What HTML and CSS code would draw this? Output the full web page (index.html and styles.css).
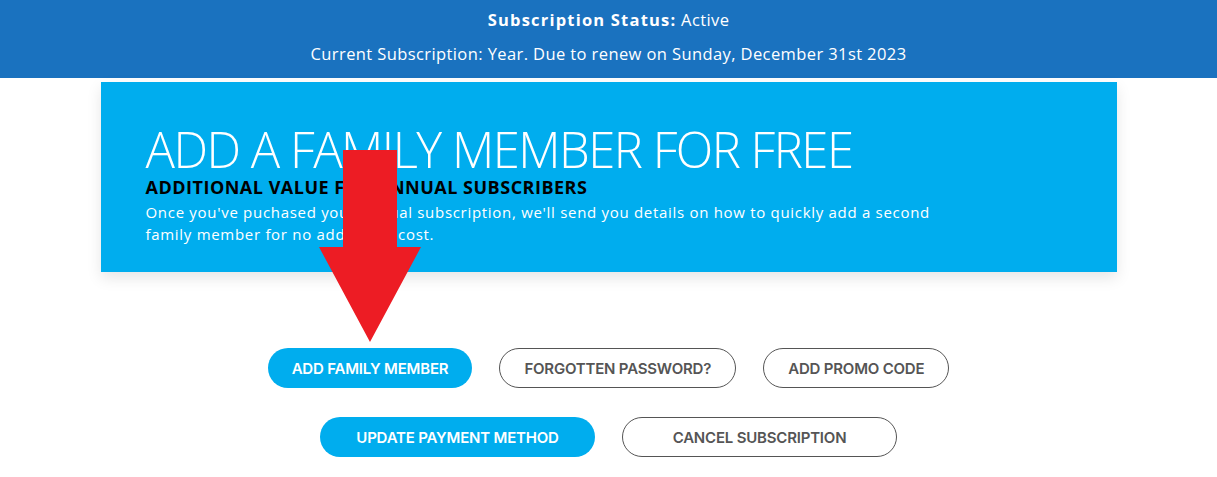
FILE: index.html
```html
<!DOCTYPE html>
<html>
<head>
<meta charset="utf-8">
<link rel="stylesheet" href="styles.css">
</head>
<body>
<div class="page">
  <header class="status">
    <p class="status-line"><strong>Subscription Status:</strong> Active</p>
    <p class="status-line">Current Subscription: Year. Due to renew on Sunday, December 31st 2023</p>
  </header>
  <section class="promo">
    <h1 class="promo-title">ADD A FAMILY MEMBER FOR FREE</h1>
    <h2 class="promo-sub">ADDITIONAL VALUE FOR ANNUAL SUBSCRIBERS</h2>
    <p class="promo-text">Once you've puchased your annual subscription, we'll send you details on how to quickly add a second family member for no additional cost.</p>
  </section>
  <div class="actions">
    <div class="row">
      <a class="btn btn-fill">ADD FAMILY MEMBER</a>
      <a class="btn btn-outline">FORGOTTEN PASSWORD?</a>
      <a class="btn btn-outline">ADD PROMO CODE</a>
    </div>
    <div class="row">
      <a class="btn btn-fill btn-wide">UPDATE PAYMENT METHOD</a>
      <a class="btn btn-outline btn-wide">CANCEL SUBSCRIPTION</a>
    </div>
  </div>
  <svg class="arrow" width="104" height="194" viewBox="0 0 104 194">
    <polygon points="24,0 78,0 78,97 102,97 51,192 0,97 24,97" fill="#ed1c24"/>
  </svg>
</div>
</body>
</html>
```
FILE: styles.css
```css
html, body {
  margin: 0;
  padding: 0;
  background: #ffffff;
}
.page {
  position: relative;
  width: 1217px;
  min-height: 477px;
  font-family: "Open Sans", "Noto Sans", sans-serif;
}
.status {
  background: #1a72bf;
  color: #ffffff;
  text-align: center;
  height: 78px;
  padding-top: 9px;
  box-sizing: border-box;
}
.status-line {
  margin: 0 0 12px 0;
  font-size: 16.5px;
  line-height: 22px;
  letter-spacing: 0.4px;
}
.status-line strong {
  font-weight: 700;
  letter-spacing: 1.2px;
}
.promo {
  width: 1016px;
  margin: 4px auto 0;
  box-sizing: border-box;
  height: 190px;
  background: #00adee;
  padding: 42px 45px 0;
  box-shadow: 0 6px 14px rgba(0, 0, 0, 0.10);
}
.promo-title {
  margin: 0;
  color: #ffffff;
  font-family: "Open Sans", sans-serif;
  font-weight: 300;
  font-size: 49px;
  line-height: 50px;
  letter-spacing: -1.5px;
}
.promo-sub {
  margin: 2px 0 0;
  color: #000000;
  font-size: 18px;
  font-weight: 700;
  line-height: 22px;
  letter-spacing: 0.5px;
}
.promo-text {
  margin: 3px 0 0;
  color: #ffffff;
  font-size: 15px;
  line-height: 22px;
  letter-spacing: 0.7px;
  max-width: 800px;
}
.actions {
  display: flex;
  flex-direction: column;
  align-items: center;
  gap: 29px;
  margin-top: 76px;
}
.row {
  display: flex;
  gap: 27px;
}
.btn {
  display: flex;
  align-items: center;
  justify-content: center;
  height: 40px;
  box-sizing: border-box;
  border-radius: 20px;
  font-family: "Inter", sans-serif;
  font-size: 15px;
  font-weight: 600;
  letter-spacing: -0.2px;
  padding: 0 24px;
}
.btn-fill {
  background: #00adee;
  color: #ffffff;
}
.btn-outline {
  border: 1px solid #555555;
  color: #555555;
  background: #ffffff;
}
.btn-wide {
  width: 275px;
}
.arrow {
  position: absolute;
  left: 319px;
  top: 150px;
}
```
